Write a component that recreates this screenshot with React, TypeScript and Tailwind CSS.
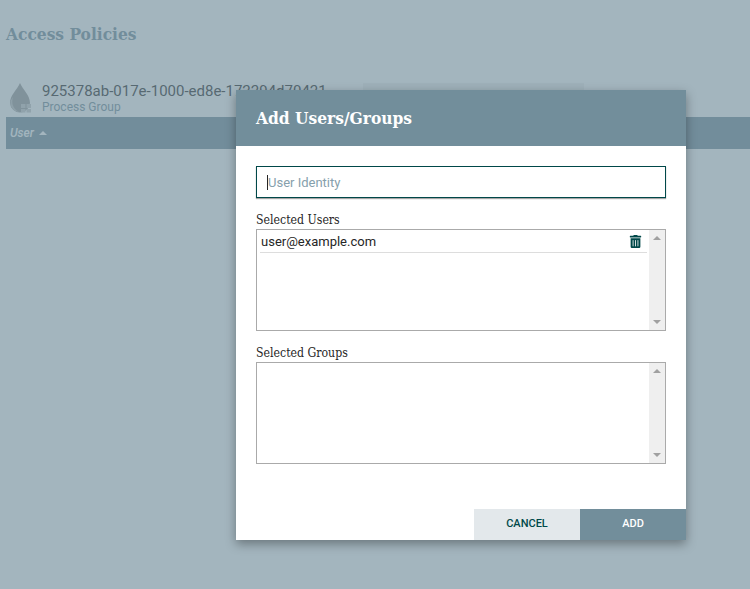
import type { ReactNode } from 'react'
import { FaTrashAlt } from 'react-icons/fa'

const slab = "font-['DejaVu_Serif_Condensed','DejaVu_Serif',serif]"

function ListBox({ label, children }: { label: string; children?: ReactNode }) {
  return (
    <div>
      <div className={`${slab} h-[18px] text-[12.2px] leading-[18px] text-[#262626]`}>{label}</div>
      <div className="flex h-[102px] border border-[#aaaaaa] bg-white">
        <div className="min-w-0 flex-1 pl-[3px] pr-[2px]">{children}</div>
        <div className="flex w-4 flex-col items-center justify-between bg-[#efefef] py-[6px]">
          <div className="h-0 w-0 border-x-[4px] border-b-[4px] border-x-transparent border-b-[#a0a0a0]" />
          <div className="h-0 w-0 border-x-[4px] border-t-[4px] border-x-transparent border-t-[#a0a0a0]" />
        </div>
      </div>
    </div>
  )
}

export default function App() {
  return (
    <div className="relative h-[589px] w-[750px] overflow-hidden bg-white font-['Roboto',sans-serif]">
      <div className="flex flex-col pl-[6px] pt-[23px]">
        <div className={`${slab} text-[17.2px] font-bold leading-[22px] text-[#728e9b]`}>Access Policies</div>
        <div className="mt-[38px] flex h-[34px] items-start">
          <svg viewBox="0 0 24 30" className="ml-[3px] h-[30px] w-[24px] shrink-0">
            <path d="M11 0C8 7 1 12 1 20a10 10 0 0 0 10 9.500a10 10 0 0 0 10-9.500C21 12 14 7 11 0Z" fill="#9c9c9c" />
            <path d="M4 14C2 20 4 26 10 29C4 28 1.500 24 1.500 20C1.500 18 2.500 16 4 14Z" fill="#c4c4c4" />
            <path d="M12 21h4.500v4h-4.500zM17.500 21h4.500v4h-4.500zM12 26h4.500v3.500h-4.500zM17.500 26h4.500v3.500h-4.500z" fill="#c8c8c8" />
          </svg>
          <div className="ml-[9px] mt-[-1px] w-[321px] shrink-0">
            <div className="text-[15px] leading-[18px] text-[#262626]">925378ab-017e-1000-ed8e-172294d70421</div>
            <div className="text-[12px] leading-[14px] text-[#728e9b]">Process Group</div>
          </div>
          <div className="h-[20px] w-[221px] bg-[#efefef]" />
        </div>
        <div className="flex h-[32px] items-center bg-[#728e9b] pl-[4px] text-[12px] font-medium italic text-white">
          User
          <span className="ml-[5px] h-0 w-0 border-x-[4px] border-b-[4px] border-x-transparent border-b-white" />
        </div>
      </div>

      <div className="absolute inset-0 bg-[#728e9b]/65" />

      <div className="absolute left-[236px] top-[90px] flex h-[450px] w-[450px] flex-col bg-white shadow-[0_4px_10px_rgba(0,0,0,0.35)]">
        <div className={`${slab} flex h-[56px] items-center bg-[#728e9b] pl-[20px] pt-[2px] text-[17.2px] font-bold text-white`}>
          Add Users/Groups
        </div>
        <div className="flex flex-1 flex-col px-[20px] pt-[20px]">
          <div className="flex h-[32px] items-center border border-[#004849] pl-[10px] pt-[1px] text-[13px] text-[#86a0ac] shadow-[0_1px_1px_rgba(0,0,0,0.35)]">
            <span className="h-[15px] w-px bg-[#262626]" />
            User Identity
          </div>
          <div className="mt-[13px] flex flex-col gap-[13px]">
            <ListBox label="Selected Users">
              <div className="flex h-[23px] items-center justify-between border-b border-[#dddddd] pl-px pr-[5px] pt-[1px] text-[13px] text-[#262626]">
                user@example.com
                <FaTrashAlt size={13} className="text-[#004849]" />
              </div>
            </ListBox>
            <ListBox label="Selected Groups" />
          </div>
        </div>
        <div className="flex h-[32px] justify-end pt-px text-[11px] font-medium">
          <div className="flex w-[106px] items-center justify-center bg-[#e3e8eb] text-[#004849]">CANCEL</div>
          <div className="flex w-[106px] items-center justify-center bg-[#728e9b] text-white">ADD</div>
        </div>
      </div>
    </div>
  )
}
